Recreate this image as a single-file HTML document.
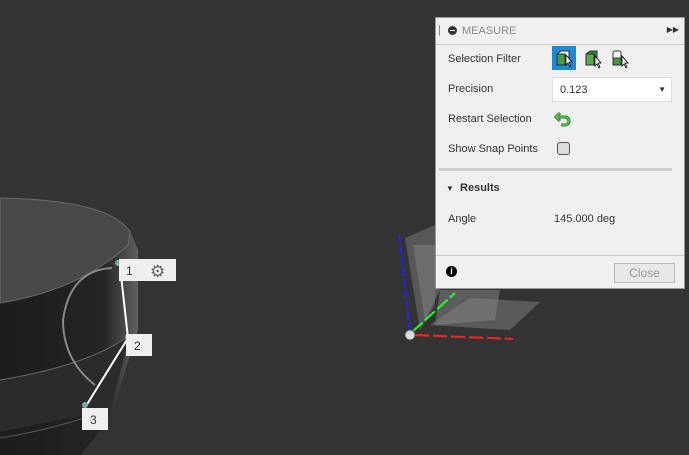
<!DOCTYPE html><html><head><style>
body{margin:0;width:689px;height:455px;background:#333;overflow:hidden;font-family:"Liberation Sans",sans-serif;position:relative}
.p{position:absolute;left:435px;top:17px;width:250px;height:272px;background:#f0f0f0;border:1px solid #999;box-sizing:border-box;font-size:11px;color:#333}
.hd{height:26px;border-bottom:1px solid #ccc;background:#f0f0f0;position:relative}
.t{position:absolute;left:26px;top:7px;color:#8a8a8a;font-size:11px}
.lbl{position:absolute;left:12px}
</style></head><body>
<svg width="689" height="455" style="position:absolute;left:0;top:0">
<defs><linearGradient id="s" x1="0" x2="1"><stop offset="0" stop-color="#1c1c1c"/><stop offset=".75" stop-color="#242424"/><stop offset="1" stop-color="#606060"/></linearGradient></defs>
<path d="M0 300 L0 455 L80 455 L110 420 L138 330 L138 250 L130 230 Z" fill="url(#s)"/>
<path d="M0 198 Q110 200 130 232 L128 245 Q80 290 0 303 Z" fill="#484848" stroke="#6a6a6a" stroke-width="1"/>
<path d="M0 380 Q90 365 130 335 L110 410 Q60 420 0 432Z" fill="#2b2b2b"/>
<path d="M0 380 Q90 365 130 335" stroke="#666" fill="none"/>
<path d="M0 438 Q60 428 100 412" stroke="#555" fill="none"/>
<path d="M112 268 Q70 270 63 320 Q63 360 95 385" stroke="#888" stroke-width="2" fill="none"/>
<path d="M120 266 L128 338 L86 406" stroke="#fff" stroke-width="2" fill="none"/>
<circle cx="118" cy="263" r="3" fill="#7aa"/><circle cx="128" cy="337" r="3" fill="#7aa"/><circle cx="85" cy="405" r="3" fill="#7aa"/>
<rect x="119" y="259" width="57" height="22" fill="#efefef"/><text x="126" y="275" font-size="12" fill="#333" font-family="Liberation Sans">1</text>
<text x="150" y="277" font-size="17" fill="#666">⚙</text>
<rect x="126" y="334" width="26" height="22" fill="#efefef"/><text x="134" y="350" font-size="12" fill="#333" font-family="Liberation Sans">2</text>
<rect x="82" y="408" width="26" height="22" fill="#efefef"/><text x="90" y="424" font-size="12" fill="#333" font-family="Liberation Sans">3</text>
<polygon points="405,238 435,225 435,305 420,330" fill="#666" opacity=".7"/>
<polygon points="413,245 440,245 440,290 425,320" fill="#7a7a7a" opacity=".6"/>
<polygon points="430,325 470,298 540,302 510,330" fill="#6a6a6a" opacity=".7"/>
<polygon points="440,290 500,290 495,320 435,325" fill="#888" opacity=".5"/>
<line x1="399" y1="235" x2="410" y2="333" stroke="#22f" stroke-width="2" stroke-dasharray="8,3"/>
<line x1="412" y1="332" x2="455" y2="293" stroke="#2f2" stroke-width="2" stroke-dasharray="14,3"/>
<line x1="415" y1="335" x2="513" y2="339" stroke="#f22" stroke-width="2" stroke-dasharray="14,4"/>
<circle cx="410" cy="335" r="5" fill="#ddd" stroke="#555"/>
</svg>
<div class="p">
<div class="hd"><span style="position:absolute;left:2px;top:6px;color:#777">|</span>
<span style="position:absolute;left:12px;top:8px;width:9px;height:9px;border-radius:50%;background:#333"></span><span style="position:absolute;left:14px;top:12px;width:5px;height:1px;background:#fff"></span>
<span class="t">MEASURE</span><span style="position:absolute;right:5px;top:7px;font-size:8px;color:#333">▶▶</span></div>
<div class="lbl" style="top:35px">Selection Filter</div>
<div style="position:absolute;left:116px;top:28px;width:24px;height:24px;background:#1e8ad6"></div>
<svg width="110" height="24" style="position:absolute;left:116px;top:28px">
<g stroke="#234" stroke-width="1"><path d="M5 8 L9 5 L17 5 L17 16 L13 19 L5 19Z" fill="#fff"/><rect x="5" y="8" width="8" height="11" fill="#4a9a3a"/></g>
<path d="M14 9 L14 19 L16 17 L18 21 L19 20 L17 16 L20 16Z" fill="#fff" stroke="#000" stroke-width=".8"/>
<g stroke="#234"><path d="M34 8 L38 5 L45 5 L45 16 L42 19 L34 19Z" fill="#3a8a2a"/><rect x="34" y="8" width="8" height="11" fill="#5aaa4a"/></g>
<path d="M43 10 L43 20 L45 18 L47 22 L48 21 L46 17 L49 17Z" fill="#fff" stroke="#000" stroke-width=".8"/>
<g stroke="#234"><rect x="61" y="5" width="8" height="14" rx="2" fill="#fff"/><rect x="61" y="12" width="8" height="7" fill="#4a9a3a"/></g>
<path d="M70 10 L70 20 L72 18 L74 22 L75 21 L73 17 L76 17Z" fill="#fff" stroke="#000" stroke-width=".8"/>
</svg>
<div class="lbl" style="top:65px">Precision</div>
<div style="position:absolute;left:116px;top:59px;width:120px;height:25px;background:#fff;border:1px solid #ddd;box-sizing:border-box"><span style="position:absolute;left:7px;top:6px">0.123</span><span style="position:absolute;right:5px;top:7px;font-size:8px">▼</span></div>
<div class="lbl" style="top:95px">Restart Selection</div>
<svg width="18" height="18" style="position:absolute;left:118px;top:91px"><path d="M6 4 L2 8 L6 12 M2 8 L10 8 Q15 8 15 12 Q15 16 10 16 L7 16" fill="none" stroke="#2a7a1a" stroke-width="3"/><path d="M6 4 L2 8 L6 12 M2 8 L10 8 Q15 8 15 12 Q15 16 10 16 L7 16" fill="none" stroke="#6c6" stroke-width="1.2"/></svg>
<div class="lbl" style="top:125px">Show Snap Points</div>
<div style="position:absolute;left:121px;top:124px;width:11px;height:11px;border:1px solid #555;border-radius:3px;background:#ddd"></div>
<div style="position:absolute;left:3px;top:150px;width:233px;height:3px;background:#ccc"></div>
<div style="position:absolute;left:10px;top:164px;font-weight:bold;font-size:11px"><span style="font-size:8px">▼</span>&nbsp; Results</div>
<div class="lbl" style="top:195px">Angle</div><div style="position:absolute;left:118px;top:195px">145.000 deg</div>
<div style="position:absolute;left:0;top:237px;width:248px;height:1px;background:#ccc"></div>
<div style="position:absolute;left:10px;top:248px;width:11px;height:11px;border-radius:50%;background:#000;color:#fff;font-size:9px;font-weight:bold;text-align:center;line-height:11px">i</div>
<div style="position:absolute;left:178px;top:245px;width:59px;height:18px;border:1px solid #bbb;background:#e8e8e8;color:#999;font-size:12px;text-align:center;line-height:18px">Close</div>
</div>
</body></html>
